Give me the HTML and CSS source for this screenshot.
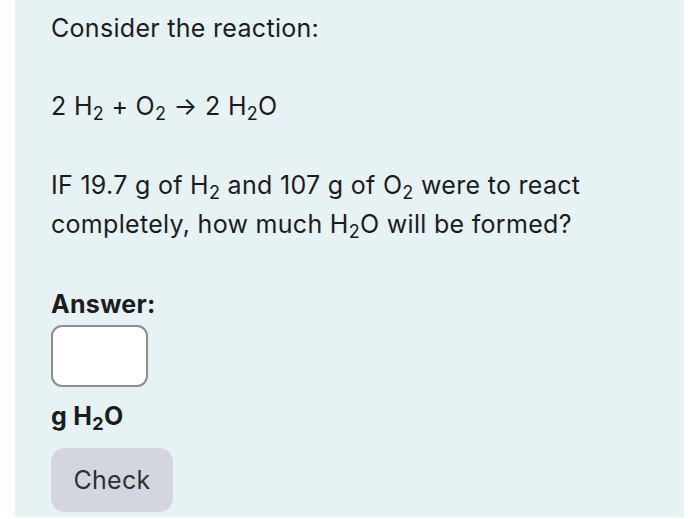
FILE: index.html
```html
<!DOCTYPE html>
<html>
<head>
<meta charset="utf-8">
<link rel="stylesheet" href="styles.css">
</head>
<body>
<div class="panel">
  <p class="line">Consider the reaction:</p>
  <p class="line eq">2 H<sub>2</sub> + O<sub>2</sub> → 2 H<sub>2</sub>O</p>
  <p class="line q">IF 19.7 g of H<sub>2</sub> and 107 g of O<sub>2</sub> were to react completely, how much H<sub>2</sub>O will be formed?</p>
  <p class="line label">Answer:</p>
  <div class="input"></div>
  <p class="line unit">g H<sub>2</sub>O</p>
  <button class="check">Check</button>
</div>
</body>
</html>
```
FILE: styles.css
```css
html, body {
  margin: 0;
  padding: 0;
  background: #ffffff;
}
.panel {
  margin-left: 15px;
  width: 669px;
  height: 517px;
  box-sizing: border-box;
  background: #e7f2f4;
  padding: 9px 36px 0 36px;
  font-family: Inter, "Liberation Sans", sans-serif;
  font-size: 25px;
  letter-spacing: 0.3px;
  color: #1c1c1e;
  display: flex;
  flex-direction: column;
  align-items: flex-start;
}
.line {
  margin: 0;
  line-height: 39px;
}
sub {
  font-size: 18px;
  line-height: 0;
  vertical-align: -5px;
}
.eq {
  margin-top: 39px;
}
.q {
  margin-top: 40px;
  width: 570px;
}
.label {
  margin-top: 41px;
  font-weight: 700;
}
.input {
  margin-top: 1px;
  width: 97px;
  height: 62px;
  box-sizing: border-box;
  border: 2px solid #8c8e90;
  border-radius: 11px;
  background: #ffffff;
}
.unit {
  margin-top: 10px;
  font-weight: 700;
}
.check {
  margin-top: 12px;
  width: 122px;
  height: 64px;
  border: none;
  border-radius: 14px;
  background: #d3d7dd;
  color: #2e2f33;
  font-family: Inter, "Liberation Sans", sans-serif;
  font-size: 25px;
  letter-spacing: 0.3px;
  padding: 0;
}
```
